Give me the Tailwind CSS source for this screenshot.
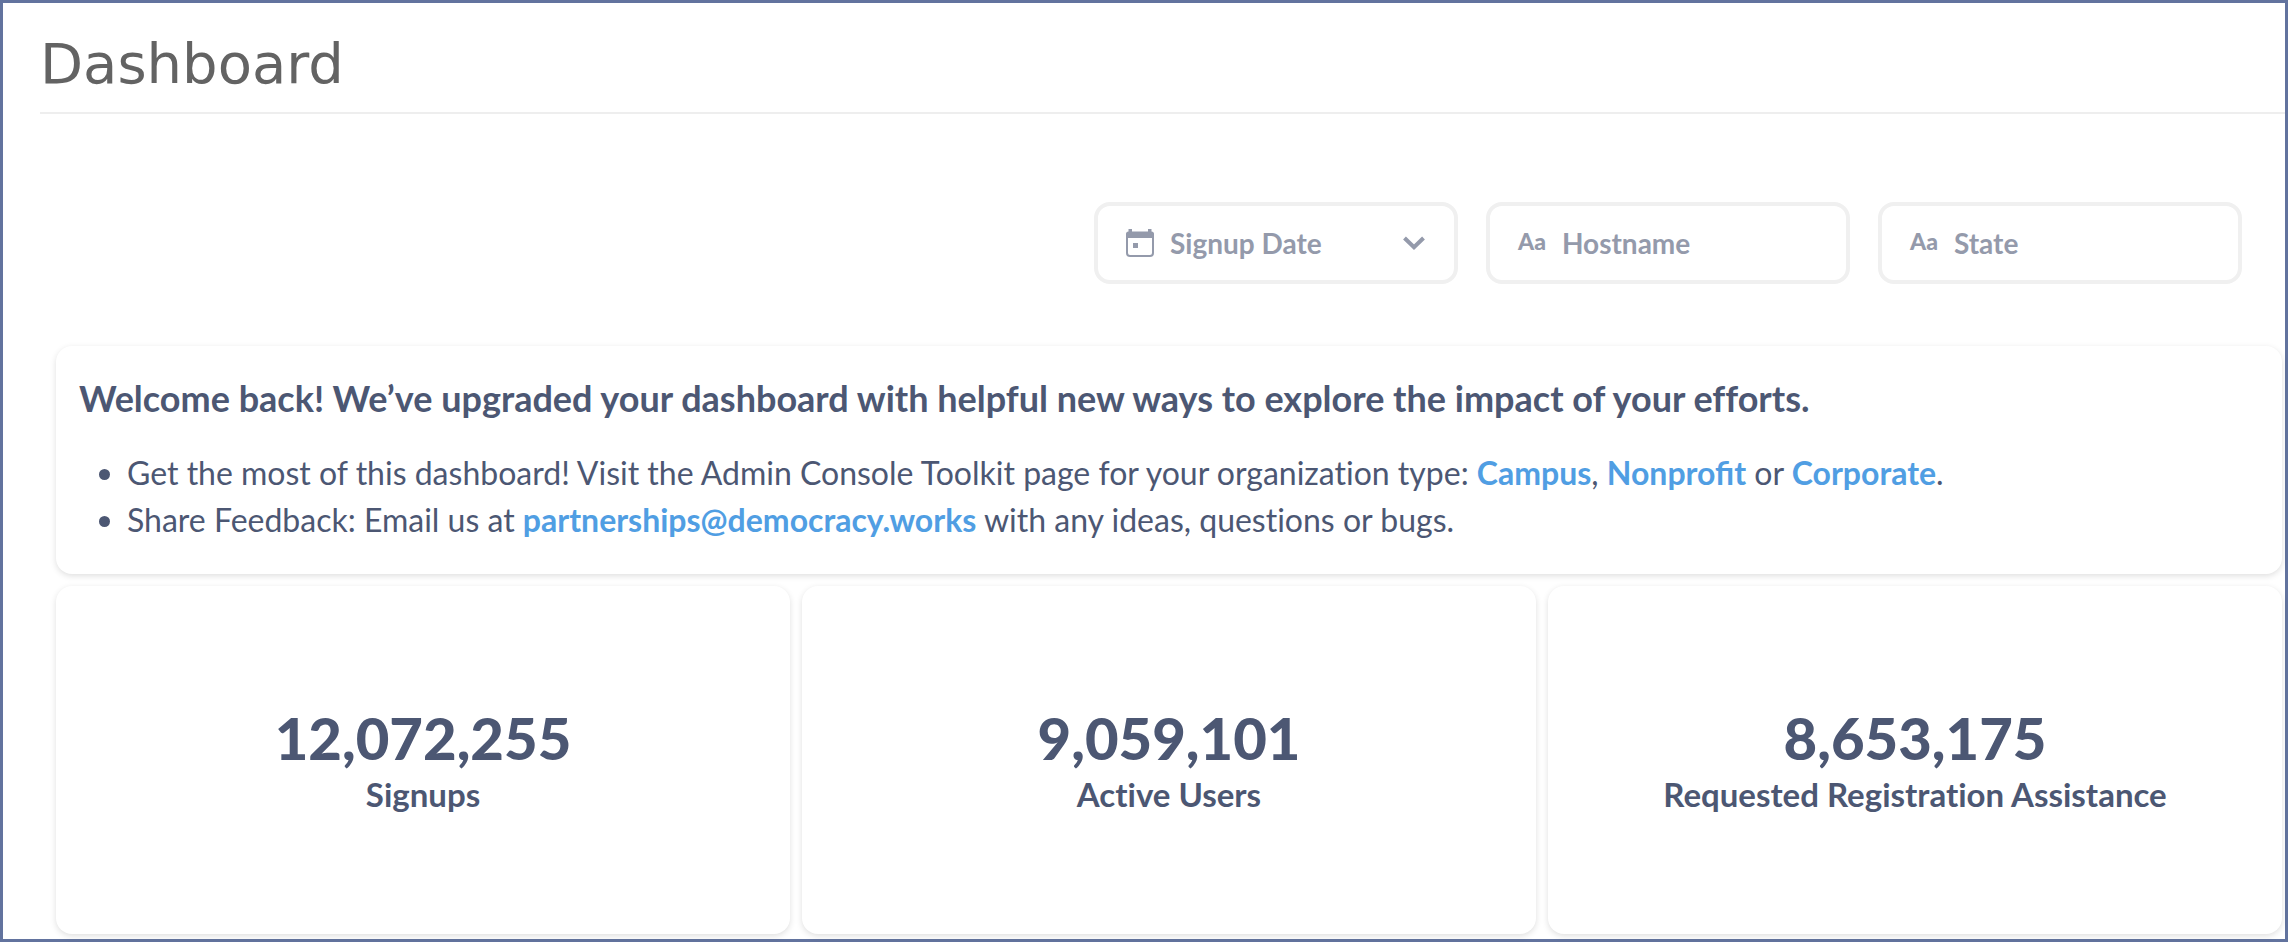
<!DOCTYPE html>
<html lang="en">
<head>
<meta charset="utf-8">
<title>Dashboard</title>
<script src="https://cdn.jsdelivr.net/npm/@tailwindcss/browser@4"></script>
</head>
<body class="bg-white">
<div class="flex min-h-screen flex-col border-3 border-[#62739e] pb-[5px] font-['Lato',sans-serif] text-[#4c5773] [font-variant-ligatures:none]">
  <header class="ml-[37px] border-b-2 border-[#eeeeee] pt-7 pb-4">
    <h1 class="font-['DejaVu_Sans',sans-serif] text-[56px] leading-[65px] text-[#636363]">Dashboard</h1>
  </header>

  <form class="mt-[88px] mr-[43px] flex justify-end gap-[28px] text-[28px] font-bold text-[#949aab]">
    <button type="button" class="flex h-[82px] w-[364px] items-center rounded-2xl border-4 border-[#f0f0f0] px-7">
      <svg class="size-7 shrink-0" viewBox="0 0 28 28" fill="none" aria-hidden="true">
        <rect x="1" y="4" width="26" height="23" rx="3" stroke="currentColor" stroke-width="2"/>
        <path d="M0 9V5a2.500 2.500 0 0 1 2.500-2.500V0H6v2.500h16V0h3.500v2.500A2.500 2.500 0 0 1 28 5v4zM7 14h5v5H7z" fill="currentColor"/>
      </svg>
      <span class="ml-4 grow text-left">Signup Date</span>
      <svg class="w-6 shrink-0" viewBox="0 0 24 16" fill="none" stroke="currentColor" stroke-width="4" aria-hidden="true"><path d="M2.500 3 12 12.300 21.500 3"/></svg>
    </button>
    <label class="flex h-[82px] w-[364px] items-center rounded-2xl border-4 border-[#f0f0f0] px-7">
      <span class="mb-1 text-[23px] font-black" aria-hidden="true">Aa</span>
      <input type="text" aria-label="Hostname" placeholder="Hostname" class="ml-4 w-full min-w-0 outline-none placeholder:text-[#949aab]">
    </label>
    <label class="flex h-[82px] w-[364px] items-center rounded-2xl border-4 border-[#f0f0f0] px-7">
      <span class="mb-1 text-[23px] font-black" aria-hidden="true">Aa</span>
      <input type="text" aria-label="State" placeholder="State" class="ml-4 w-full min-w-0 outline-none placeholder:text-[#949aab]">
    </label>
  </form>

  <main class="mt-[62px] mr-[3px] ml-[53px] flex grow flex-col gap-3">
    <section class="h-[228px] rounded-2xl bg-white px-[23px] pt-[30px] shadow-[0_2px_6px_rgba(0,0,0,0.13)]">
      <h2 class="text-[36px] leading-[44px] font-bold">Welcome back! We’ve upgraded your dashboard with helpful new ways to explore the impact of your efforts.</h2>
      <ul class="mt-[29px] list-disc pl-[48px] text-[32px] leading-[47px]">
        <li>Get the most of this dashboard! Visit the Admin Console Toolkit page for your organization type: <a href="#campus" class="font-bold text-[#509ee3]">Campus</a>, <a href="#nonprofit" class="font-bold text-[#509ee3] [font-variant-ligatures:normal]">Nonprofit</a> or <a href="#corporate" class="font-bold text-[#509ee3]">Corporate</a>.</li>
        <li>Share Feedback: Email us at <a href="mailto:partnerships@democracy.works" class="font-bold text-[#509ee3]">partnerships@democracy.works</a> with any ideas, questions or bugs.</li>
      </ul>
    </section>
    <div class="grid grow grid-cols-3 gap-3 text-center">
      <section class="flex flex-col items-center justify-center rounded-2xl bg-white shadow-[0_2px_6px_rgba(0,0,0,0.13)]">
        <p class="text-[58px] leading-[68px] font-black">12,072,255</p>
        <h3 class="text-[33px] leading-[44px] font-bold">Signups</h3>
      </section>
      <section class="flex flex-col items-center justify-center rounded-2xl bg-white shadow-[0_2px_6px_rgba(0,0,0,0.13)]">
        <p class="text-[58px] leading-[68px] font-black">9,059,101</p>
        <h3 class="text-[33px] leading-[44px] font-bold">Active Users</h3>
      </section>
      <section class="flex flex-col items-center justify-center rounded-2xl bg-white shadow-[0_2px_6px_rgba(0,0,0,0.13)]">
        <p class="text-[58px] leading-[68px] font-black">8,653,175</p>
        <h3 class="text-[33px] leading-[44px] font-bold">Requested Registration Assistance</h3>
      </section>
    </div>
  </main>
</div>
</body>
</html>
